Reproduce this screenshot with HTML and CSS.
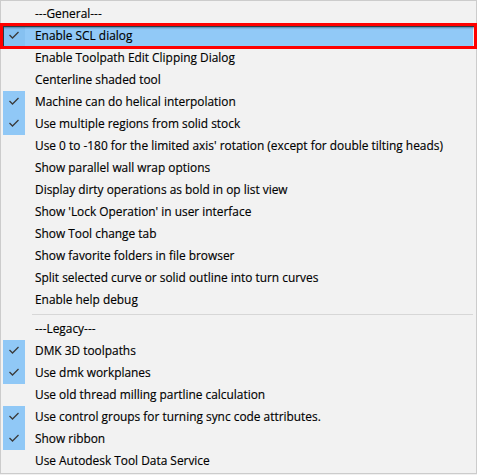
FILE: index.html
```html
<!DOCTYPE html>
<html>
<head>
<meta charset="utf-8">
<link rel="stylesheet" href="styles.css">
</head>
<body>
<div class="menu">
  <div class="item"><span class="chk"></span><span class="label">---General---</span></div>
  <div class="item hot checked"><span class="chk"><svg viewBox="0 0 22 22" width="22" height="22"><polyline points="6.5,10 9.5,13 15.5,7"/></svg></span><span class="label">Enable SCL dialog</span></div>
  <div class="item"><span class="chk"></span><span class="label">Enable Toolpath Edit Clipping Dialog</span></div>
  <div class="item"><span class="chk"></span><span class="label">Centerline shaded tool</span></div>
  <div class="item checked"><span class="chk"><svg viewBox="0 0 22 22" width="22" height="22"><polyline points="6.5,10 9.5,13 15.5,7"/></svg></span><span class="label">Machine can do helical interpolation</span></div>
  <div class="item checked"><span class="chk"><svg viewBox="0 0 22 22" width="22" height="22"><polyline points="6.5,10 9.5,13 15.5,7"/></svg></span><span class="label">Use multiple regions from solid stock</span></div>
  <div class="item"><span class="chk"></span><span class="label">Use 0 to -180 for the limited axis' rotation (except for double tilting heads)</span></div>
  <div class="item"><span class="chk"></span><span class="label">Show parallel wall wrap options</span></div>
  <div class="item"><span class="chk"></span><span class="label">Display dirty operations as bold in op list view</span></div>
  <div class="item"><span class="chk"></span><span class="label">Show 'Lock Operation' in user interface</span></div>
  <div class="item"><span class="chk"></span><span class="label">Show Tool change tab</span></div>
  <div class="item"><span class="chk"></span><span class="label">Show favorite folders in file browser</span></div>
  <div class="item"><span class="chk"></span><span class="label">Split selected curve or solid outline into turn curves</span></div>
  <div class="item"><span class="chk"></span><span class="label">Enable help debug</span></div>
  <div class="sep"><div class="sep-line"></div></div>
  <div class="item"><span class="chk"></span><span class="label">---Legacy---</span></div>
  <div class="item checked"><span class="chk"><svg viewBox="0 0 22 22" width="22" height="22"><polyline points="6.5,10 9.5,13 15.5,7"/></svg></span><span class="label">DMK 3D toolpaths</span></div>
  <div class="item checked"><span class="chk"><svg viewBox="0 0 22 22" width="22" height="22"><polyline points="6.5,10 9.5,13 15.5,7"/></svg></span><span class="label">Use dmk workplanes</span></div>
  <div class="item"><span class="chk"></span><span class="label">Use old thread milling partline calculation</span></div>
  <div class="item checked"><span class="chk"><svg viewBox="0 0 22 22" width="22" height="22"><polyline points="6.5,10 9.5,13 15.5,7"/></svg></span><span class="label">Use control groups for turning sync code attributes.</span></div>
  <div class="item checked"><span class="chk"><svg viewBox="0 0 22 22" width="22" height="22"><polyline points="6.5,10 9.5,13 15.5,7"/></svg></span><span class="label">Show ribbon</span></div>
  <div class="item"><span class="chk"></span><span class="label">Use Autodesk Tool Data Service</span></div>
  <div class="annot"></div>
</div>
</body>
</html>
```

FILE: styles.css
```css
html, body {
  margin: 0;
  padding: 0;
  background: #f0f0f0;
}
.menu {
  position: relative;
  width: 477px;
  height: 474px;
  box-sizing: border-box;
  border: 1px solid #cccccc;
  background: #f2f2f2;
  padding: 2px 3px 1px 2px;
  font-family: "Open Sans", "Noto Sans", sans-serif;
  font-size: 11.9px;
  color: #000;
}
.item {
  display: flex;
  align-items: center;
  height: 22px;
}
.chk {
  width: 22px;
  height: 22px;
  flex: none;
  display: flex;
}
.checked .chk {
  background: #90c8f6;
}
.chk svg polyline {
  fill: none;
  stroke: #3a3a3a;
  stroke-width: 1.3;
}
.label {
  margin-left: 10px;
  white-space: nowrap;
  line-height: 16px;
  padding-bottom: 2px;
  -webkit-text-stroke: 0.15px #000;
}
.hot {
  background: #91c9f7;
}
.hot .chk {
  background: #86c1f1;
}
.sep {
  height: 7px;
  padding: 3px 0 3px 29px;
  box-sizing: border-box;
}
.sep-line {
  height: 1px;
  background: #d7d7d7;
}
.annot {
  position: absolute;
  left: -1px;
  top: 22px;
  width: 477px;
  height: 26px;
  box-sizing: border-box;
  border: 3px solid #ff0000;
  box-shadow: inset 1px 1px 0 #2e3a44, inset 0 3px 2px -1px rgba(40, 70, 100, 0.55);
}
```
